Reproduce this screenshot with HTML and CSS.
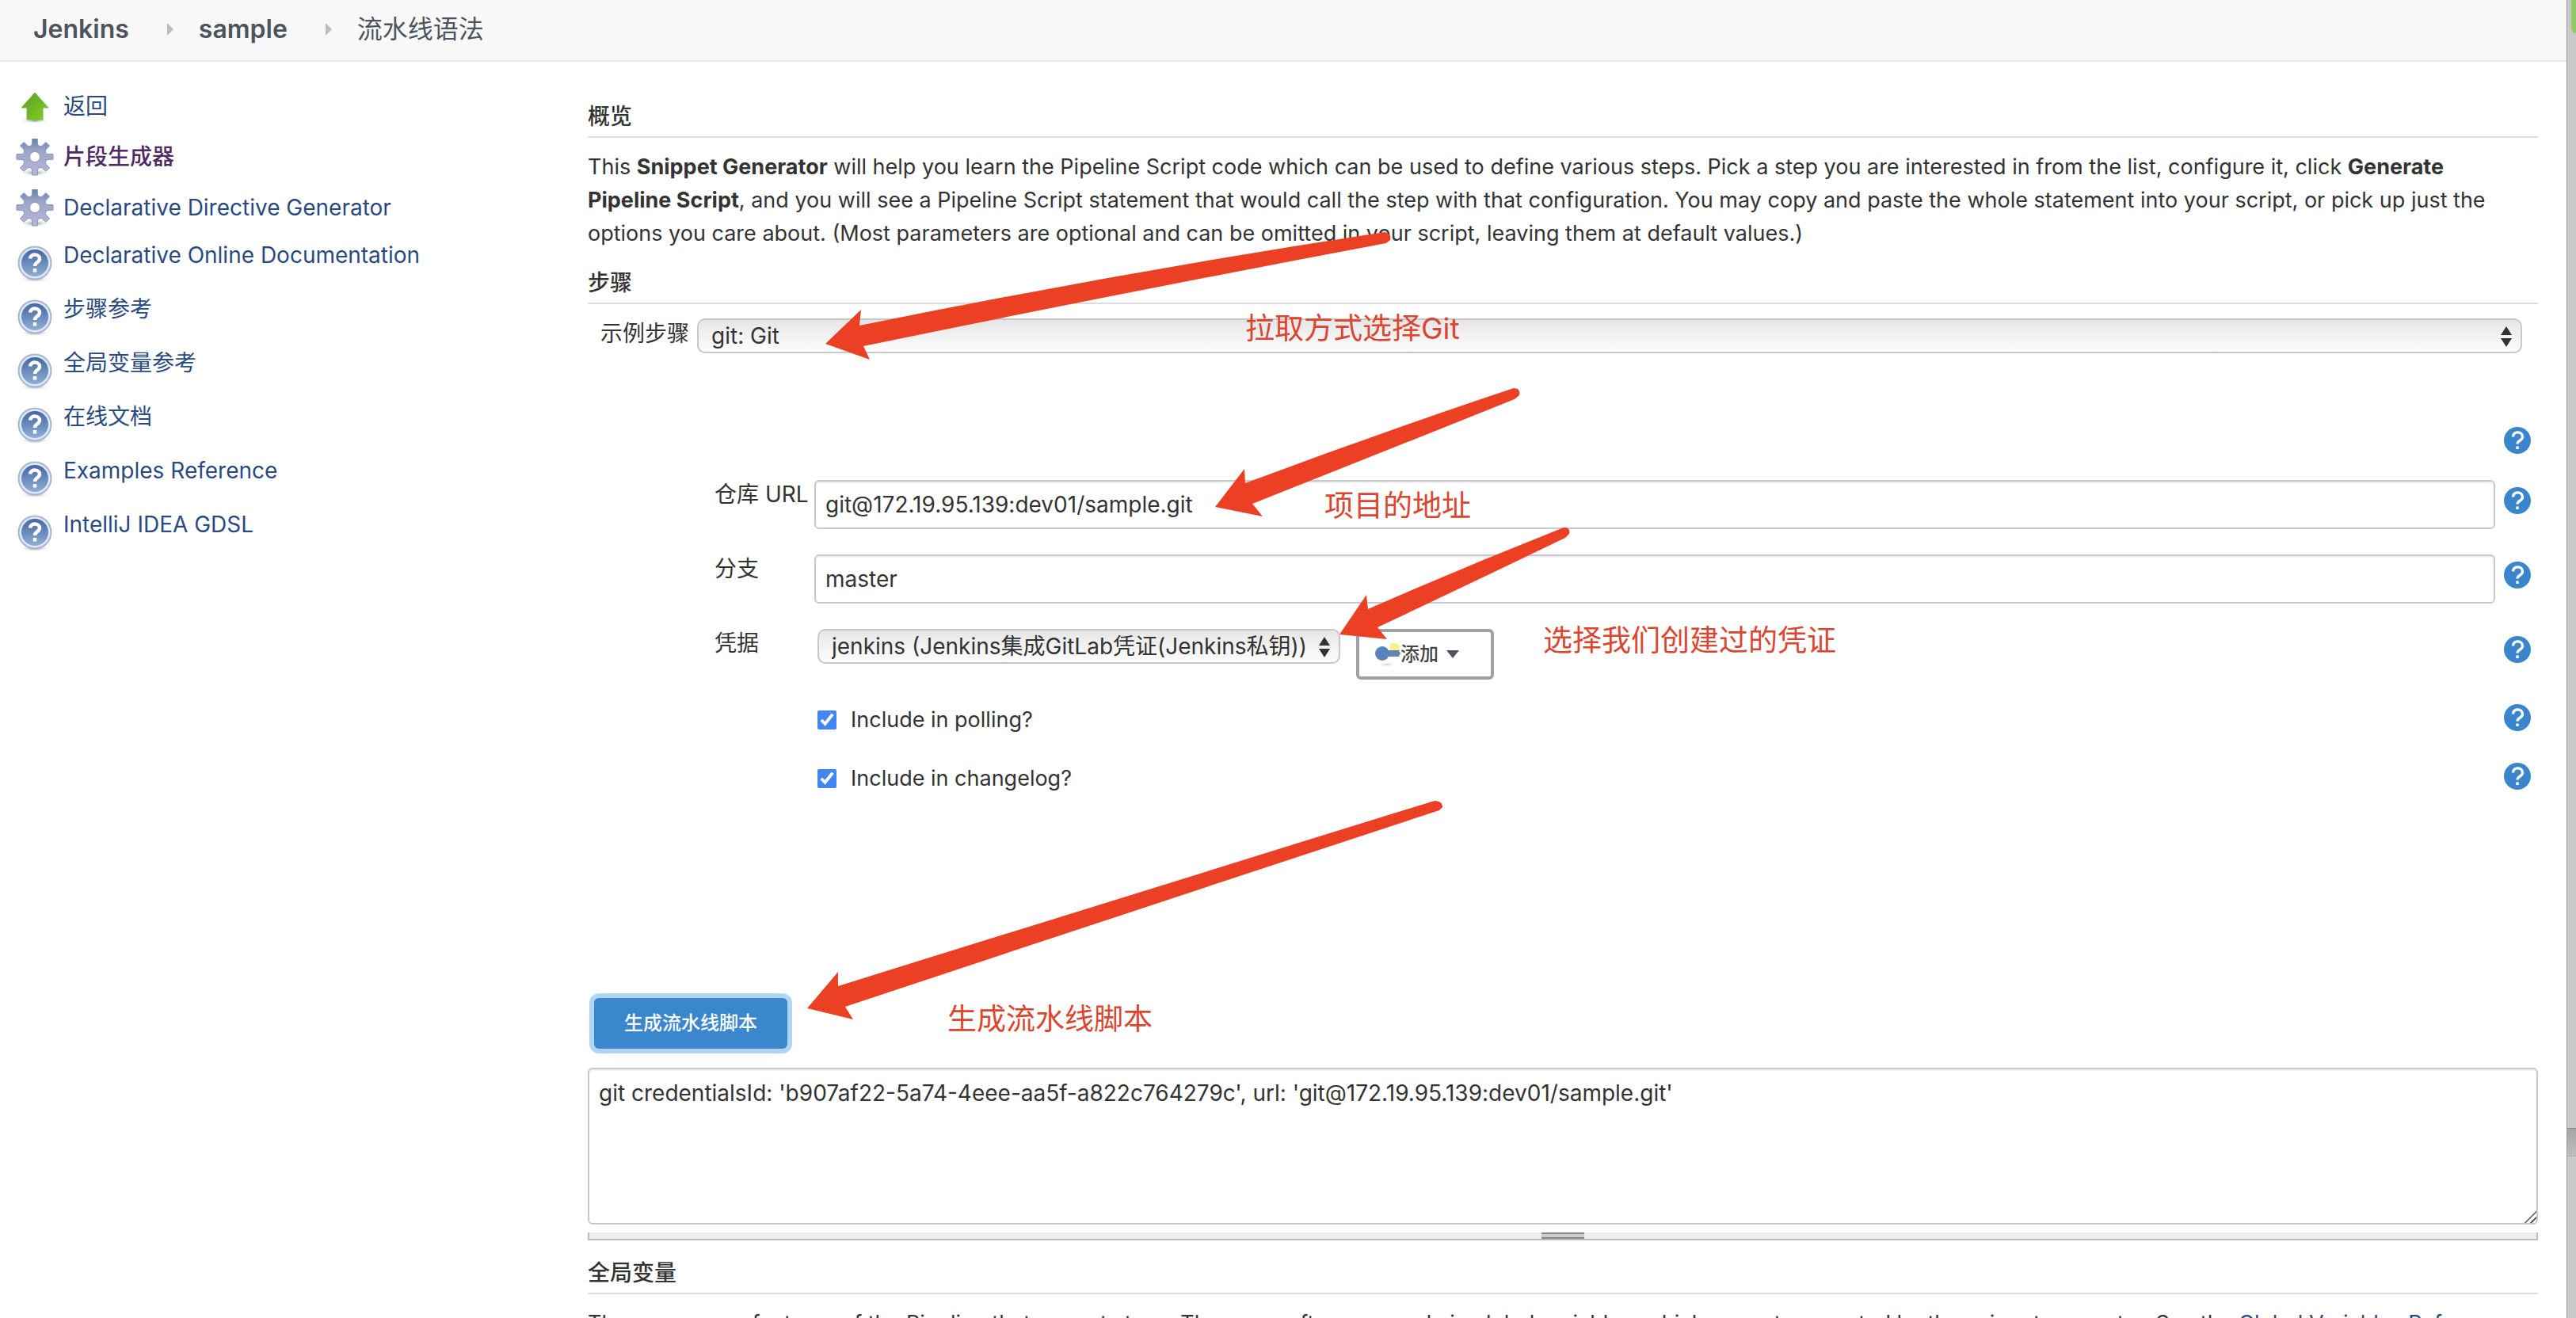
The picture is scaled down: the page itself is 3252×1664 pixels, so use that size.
FILE: index.html
```html
<!DOCTYPE html>
<html lang="zh-CN">
<head>
<meta charset="utf-8">
<title>流水线语法</title>
<link rel="stylesheet" href="styles.css">
</head>
<body>
<svg class="sprite" aria-hidden="true">
  <defs>
    <linearGradient id="green" x1="0" y1="0" x2="1" y2="1"><stop offset="0" stop-color="#5c9a2c"/><stop offset="1" stop-color="#7fd31c"/></linearGradient>
    <linearGradient id="steel" x1="0" y1="0" x2="0" y2="1"><stop offset="0" stop-color="#6580b0"/><stop offset=".35" stop-color="#9ca7c8"/><stop offset="1" stop-color="#b8b5dc"/></linearGradient>
    <linearGradient id="blue" x1="0" y1="0" x2="0" y2="1"><stop offset="0" stop-color="#44699f"/><stop offset="1" stop-color="#8fadd6"/></linearGradient>
    <radialGradient id="shade"><stop offset="0" stop-color="#888"/><stop offset="1" stop-color="#fff" stop-opacity="0"/></radialGradient>
    <symbol id="up" viewBox="0 0 48 48"><ellipse cx="24" cy="41" rx="19" ry="4" fill="url(#shade)"/><path d="M24 6 41 25H34V40H14V25H7Z" fill="url(#green)" stroke="#7cb355"/></symbol>
    <symbol id="gear" viewBox="0 0 48 48"><ellipse cx="24" cy="43" rx="20" ry="5" fill="url(#shade)"/><path fill="url(#steel)" stroke="#8a92b2" stroke-linejoin="round" fill-rule="evenodd" d="M20.800 0H27.200L27.400 6.500Q29 11 33.300 8.900L38 4.500 42.500 9 38.100 13.700Q36 18 40.500 19.600L47 19.800V26.200L40.500 26.400Q36 28 38.100 32.300L42.500 37 38 41.500 33.300 37.100Q29 35 27.400 39.500L27.200 46H20.800L20.600 39.500Q19 35 14.700 37.100L10 41.500 5.500 37 9.900 32.300Q12 28 7.500 26.400L1 26.200V19.800L7.500 19.600Q12 18 9.900 13.700L5.500 9 10 4.500 14.700 8.900Q19 11 20.600 6.500ZM24 16.500a6.500 6.500 0 1 0 0 13 6.500 6.500 0 0 0 0-13Z"/></symbol>
    <symbol id="doc" viewBox="0 0 48 48"><ellipse cx="24" cy="43" rx="19" ry="5" fill="url(#shade)"/><circle cx="24" cy="23" r="20.500" fill="#dde7f7" stroke="#a8b7d0" stroke-width="2"/><circle cx="24" cy="23" r="17" fill="url(#blue)"/><path d="M18 17.500c1-7 12-6 12 0 0 5-6 4.500-6 9.500M24 30v4.500" fill="none" stroke="#fff" stroke-width="4.500"/></symbol>
    <symbol id="help" viewBox="0 0 34 34"><circle cx="17" cy="17" r="17" fill="#3b85cc"/><path d="M11.500 12.500c0-8 12-7 12 0 0 5-6.500 4.500-6.500 9" fill="none" stroke="#fff" stroke-width="3.400"/><path d="M15.300 24.500h3.400v3.500h-3.400z" fill="#fff"/></symbol>
    <symbol id="key" viewBox="0 0 32 32"><ellipse cx="15" cy="29" rx="14" ry="3" fill="url(#shade)" opacity=".4"/><path d="M20 2h7l4 4v5l-4 3h-6l-3-6z" fill="#fbf08a"/><path d="M12 11h18l2 4-2 4H14z" fill="#5f86b4"/><circle cx="9" cy="15" r="9" fill="#5b83bb"/></symbol>
  </defs>
</svg>

<div class="shell">
<div class="page">
  <nav class="crumbs">
    <a href="#"><b>Jenkins</b></a><i class="sep"></i><a href="#"><b>sample</b></a><i class="sep"></i><a href="#">流水线语法</a>
  </nav>

  <div class="columns">
    <nav class="tasks">
      <a class="task short" href="#"><svg><use href="#up"/></svg>返回</a>
      <a class="task short current" href="#"><svg><use href="#gear"/></svg>片段生成器</a>
      <a class="task short" href="#"><svg><use href="#gear"/></svg>Declarative Directive Generator</a>
      <a class="task doc" href="#"><svg><use href="#doc"/></svg>Declarative Online Documentation</a>
      <a class="task doc" href="#"><svg><use href="#doc"/></svg>步骤参考</a>
      <a class="task doc" href="#"><svg><use href="#doc"/></svg>全局变量参考</a>
      <a class="task doc" href="#"><svg><use href="#doc"/></svg>在线文档</a>
      <a class="task doc" href="#"><svg><use href="#doc"/></svg>Examples Reference</a>
      <a class="task doc" href="#"><svg><use href="#doc"/></svg>IntelliJ IDEA GDSL</a>
    </nav>

    <main class="main">
      <h2>概览</h2>
      <p class="intro">This <b>Snippet Generator</b> will help you learn the Pipeline Script code which can be used to define various steps. Pick a step you are interested in from the list, configure it, click <b>Generate Pipeline Script</b>, and you will see a Pipeline Script statement that would call the step with that configuration. You may copy and paste the whole statement into your script, or pick up just the options you care about. (Most parameters are optional and can be omitted in your script, leaving them at default values.)</p>
      <h2>步骤</h2>
      <div class="step">
        <label for="step">示例步骤</label>
        <div class="picker grow"><select id="step"><option>git: Git</option></select><i class="updown"></i></div>
      </div>

      <form class="fields">
        <div class="row first"><button type="button" class="help" aria-label="Help"><svg><use href="#help"/></svg></button></div>
        <div class="row"><label for="url">仓库 URL</label><input class="text" id="url" value="git@172.19.95.139:dev01/sample.git"><button type="button" class="help" aria-label="Help"><svg><use href="#help"/></svg></button></div>
        <div class="row"><label for="branch">分支</label><input class="text" id="branch" value="master"><button type="button" class="help" aria-label="Help"><svg><use href="#help"/></svg></button></div>
        <div class="row"><label for="cred">凭据</label>
          <div class="cell">
            <div class="picker cred"><select id="cred"><option>jenkins (Jenkins集成GitLab凭证(Jenkins私钥))</option></select><i class="updown"></i></div>
            <button type="button" class="add"><svg><use href="#key"/></svg>添加<i class="caret"></i></button>
          </div>
          <button type="button" class="help" aria-label="Help"><svg><use href="#help"/></svg></button></div>
        <div class="row check"><div class="tick"><input type="checkbox" id="poll" checked><label for="poll">Include in polling?</label></div><button type="button" class="help" aria-label="Help"><svg><use href="#help"/></svg></button></div>
        <div class="row check"><div class="tick"><input type="checkbox" id="log" checked><label for="log">Include in changelog?</label></div><button type="button" class="help" aria-label="Help"><svg><use href="#help"/></svg></button></div>
      </form>

      <button type="button" class="generate">生成流水线脚本</button>
      <textarea class="output" aria-label="Pipeline Script">git credentialsId: 'b907af22-5a74-4eee-aa5f-a822c764279c', url: 'git@172.19.95.139:dev01/sample.git'</textarea>
      <div class="handle"><i></i></div>
      <h2>全局变量</h2>
      <p class="intro">There are many features of the Pipeline that are not steps. These are often exposed via global variables, which are not supported by the snippet generator. See the <a href="#">Global Variables Reference</a> for&nbsp;details.</p>
    </main>
  </div>

  <svg class="arrows" aria-hidden="true" width="2100" height="1400" fill="#ec4025">
    <path d="M1042 434 1087 391 1085 411Q1420 343 1748 293Q1757 295 1755 303L1750 307Q1420 369 1090 437L1098 454Z"/>
    <path d="M1534 640 1571 592 1572 610Q1740 547 1911 490Q1920 490 1918 499L1912 504Q1750 569 1581 636L1594 652Z"/>
    <path d="M1691 801 1725 751 1727 769Q1850 715 1974 666Q1983 666 1981 674L1976 679Q1860 735 1739 792L1751 807Z"/>
    <path d="M1019 1273 1058 1227 1058 1245Q1430 1129 1811 1011Q1821 1011 1821 1019L1817 1023Q1440 1147 1067 1271L1077 1287Z"/>
  </svg>
  <span class="note n1">拉取方式选择Git</span>
  <span class="note n2">项目的地址</span>
  <span class="note n3">选择我们创建过的凭证</span>
  <span class="note n4">生成流水线脚本</span>
</div>
<aside class="edge"><i class="tip"></i><i class="band"></i></aside>
</div>
</body>
</html>
```
FILE: styles.css
```css
* { box-sizing: border-box; }
body {
  margin: 0;
  height: 100vh;
  overflow: hidden;
  background: #fff;
  color: #333;
  font: 28px/42px Inter, "Noto Sans CJK SC", sans-serif;
}
a { color: #2a4a7f; text-decoration: none; }
i { display: block; flex: none; }
button, input, select, textarea { font: inherit; color: inherit; }
.sprite { position: absolute; width: 0; height: 0; }

.shell { display: flex; height: 100%; }
.page { position: relative; flex: 1; min-width: 0; }

/* Strip of the window behind, at the right edge */
.edge {
  flex: none;
  display: flex;
  flex-direction: column;
  justify-content: space-between;
  width: 12px;
  padding-bottom: 204px;
  border-left: 1px solid #999;
  background: #c9c9c9;
}
.tip { height: 42px; margin-left: 5px; border-radius: 0 0 0 8px; background: #8fcb67; }
.band { height: 36px; border-top: 1px solid #888; border-bottom: 1px solid #aaa; background: linear-gradient(#a4a4a4, #bdbdbd); }

.crumbs {
  display: flex;
  align-items: center;
  height: 78px;
  padding: 0 42px 2px;
  border-bottom: 2px solid #e8e8e8;
  background: #f8f8f8;
  font-size: 32px;
}
.crumbs a { color: #4d545d; }
.crumbs b { font-weight: 600; }
.sep { margin: 0 32px 0 48px; border: 8px solid transparent; border-left-color: #bbb; border-right: 0; }

.columns { display: flex; }
.tasks { flex: none; width: 742px; padding: 24px 20px; display: flex; flex-direction: column; }
.task { display: flex; gap: 12px; height: 68px; padding-top: 11px; }
.task svg { flex: none; width: 48px; height: 48px; }
.short { height: 64px; }
.short svg { margin-top: -2px; }
.doc { padding-top: 7px; }
.doc svg { margin-top: 8px; }
.current { color: #4f2a63; font-weight: 500; }

.main { flex: 1; min-width: 0; padding: 48px 36px 0 0; }
h2 {
  margin: 0;
  height: 48px;
  border-bottom: 2px solid #ddd;
  font-size: 28px;
  font-weight: 500;
  line-height: 42px;
}
.intro { margin: 16px 0 20px; padding-right: 20px; font-size: 27px; }
.step { display: flex; margin: 18px 20px 0 16px; gap: 10px; line-height: 38px; }

.picker { position: relative; }
.picker select {
  appearance: none;
  display: block;
  width: 100%;
  height: 44px;
  padding: 0 16px;
  border: 2px solid #c8c8c8;
  border-radius: 10px;
  background: linear-gradient(#e6e6e6, #fdfdfd);
  line-height: 40px;
}
.grow { flex: 1; }
.cred { width: 660px; margin-left: 4px; }
.updown { position: absolute; right: 13px; top: 10px; width: 14px; height: 26px; pointer-events: none; }
.updown::before, .updown::after { content: ""; display: block; border: 7px solid transparent; }
.updown::before { border-bottom: 11px solid #333; border-top: 0; }
.updown::after { border-top: 11px solid #333; border-bottom: 0; margin-top: 4px; }

.fields { padding-left: 160px; }
.row { display: flex; height: 94px; align-items: flex-start; }
.row > label { flex: none; width: 126px; line-height: 36px; }
.row .help { margin: 9px 9px 0 11px; }
.first { height: 160px; padding-top: 84px; justify-content: flex-end; }
.help { flex: none; width: 34px; height: 34px; padding: 0; border: 0; background: none; }
.help svg { display: block; width: 34px; height: 34px; }
.text {
  flex: 1;
  min-width: 0;
  height: 62px;
  padding: 0 12px;
  border: 2px solid #c8c8c8;
  border-radius: 6px;
  background: #fff;
  box-shadow: inset 0 2px 2px #eee;
}
.cell { flex: 1; display: flex; align-items: flex-start; gap: 20px; }
.add {
  display: flex;
  align-items: center;
  width: 174px;
  height: 64px;
  padding: 0 20px;
  border: 4px solid #9ba3a9;
  border-radius: 6px;
  background: #fff;
  color: #444;
  font-size: 24px;
  font-weight: 500;
}
.add svg { width: 32px; height: 32px; }
.caret { margin-left: 10px; border: 8px solid transparent; border-top: 10px solid #4d545d; border-bottom: 0; }
.check { height: 74px; padding-left: 126px; }
.check .help { margin-top: 1px; }
.tick { flex: 1; display: flex; align-items: center; gap: 18px; padding-left: 4px; height: 42px; font-size: 27px; }
.tick input { width: 24px; height: 24px; margin: 0; accent-color: #4285f4; }

.generate {
  display: block;
  width: 244px;
  height: 64px;
  margin: 224px 0 0 8px;
  padding: 0;
  border: 0;
  border-radius: 6px;
  background: #3b87cd;
  box-shadow: 0 0 0 6px #b1d6f3;
  color: #fff;
  font-size: 24px;
  font-weight: 500;
}
.output {
  display: block;
  width: 100%;
  height: 198px;
  margin-top: 24px;
  padding: 9px 12px;
  border: 2px solid #c8c8c8;
  border-radius: 6px;
  box-shadow: inset 0 2px 2px #eee;
}
.output::-webkit-scrollbar { width: 18px; height: 18px; }
.output::-webkit-resizer {
  background: linear-gradient(135deg, transparent 48%, #666 49%, #666 56%, transparent 57%, transparent 72%, #666 73%, #666 80%, transparent 81%);
}
.handle {
  height: 10px;
  margin: 10px 0 20px;
  border: 2px solid #bbb;
  border-top: 0;
  background: #ededed;
}
.handle i { width: 54px; height: 8px; margin: 0 auto; border: 2px solid #888; border-width: 2px 0; background: #ccc; }

.arrows { position: absolute; left: 0; top: 0; pointer-events: none; }
.note { position: absolute; color: #db4630; font-size: 37px; line-height: 48px; white-space: nowrap; }
.n1 { left: 1572px; top: 391px; }
.n2 { left: 1672px; top: 615px; }
.n3 { left: 1948px; top: 785px; }
.n4 { left: 1196px; top: 1263px; }
```
